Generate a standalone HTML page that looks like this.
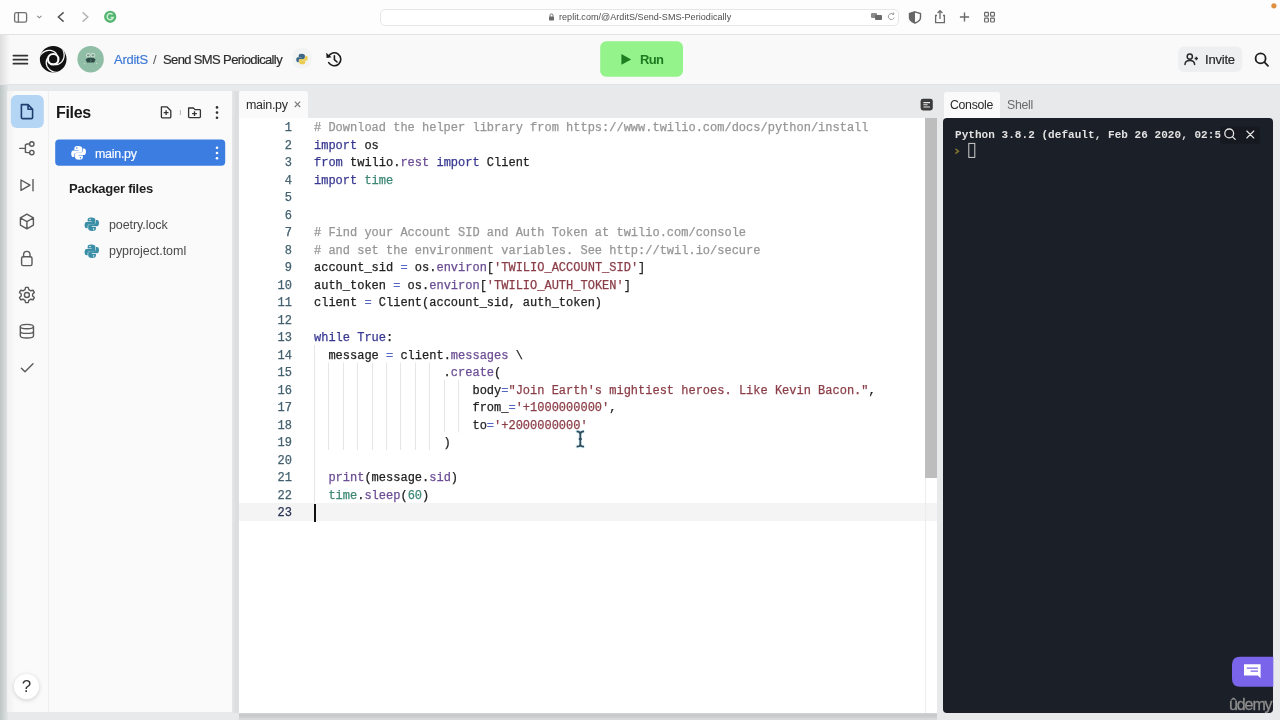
<!DOCTYPE html>
<html><head><meta charset="utf-8">
<style>
*{box-sizing:border-box;margin:0;padding:0}
html,body{width:1280px;height:720px;overflow:hidden;background:#e7e9ea;-webkit-font-smoothing:antialiased;font-family:"Liberation Sans",sans-serif;position:relative}
.a{position:absolute;will-change:transform}
#chrome{left:0;top:0;width:1280px;height:35px;background:#fdfdfd;border-bottom:1px solid #e2e2e2}
#url{left:380px;top:9px;width:519px;height:17px;border:1px solid #e6e6e6;border-radius:5px;background:#fff}
#hdr{left:0;top:35px;width:1280px;height:50px;background:#f9f9f9;border-bottom:1px solid #e3e3e5}
#lstrip{left:0;top:85px;width:8px;height:635px;background:linear-gradient(90deg,#bec5c5,#d3d8d8 60%,#e2e5e5)}
#hstrip{left:0;top:35px;width:10px;height:49px;background:linear-gradient(90deg,#dedede,#f9f9f9)}
#rail{left:7px;top:91px;width:42px;height:621px;background:linear-gradient(90deg,#f0f0f0,#fafafa 8px);border-right:1px solid #efefef}
#files{left:49px;top:91px;width:183px;height:621px;background:#fafafa}
#tab{left:239px;top:91px;width:69px;height:27px;background:#fafafa;border-radius:3px 3px 0 0}
#ed{left:239px;top:118px;width:698px;height:595px;background:#fff}
#ctab{left:943.5px;top:91.5px;width:56px;height:27px;background:#fafafa;border-radius:3px 3px 0 0}
#con{left:943px;top:118px;width:330px;height:595px;background:#1b1f27;border-radius:4px}
.code{font-family:"Liberation Mono",monospace;font-size:12px;line-height:17.5px;white-space:pre;-webkit-text-stroke:0.25px currentColor}
.ln{color:#43606f;text-align:right;width:60px}
.c{color:#969696}.k{color:#383892}.p{color:#6b4d94}.t{color:#3d8874}.s{color:#8b3d47}.o{color:#5566c4}.n{color:#222}
.ui{color:#2b2b2b;white-space:nowrap}
</style></head><body>
<div id="chrome" class="a"></div>
<div id="url" class="a"></div>
<svg class="a" style="left:0;top:0" width="1280" height="35">
 <g fill="none" stroke="#6f6f6f" stroke-width="1.3">
  <rect x="14.6" y="12.6" width="12" height="9.6" rx="1.8"/>
  <line x1="18.4" y1="12.6" x2="18.4" y2="22.2"/>
 </g>
 <path d="M37.2 15.8 L39.3 17.8 L41.4 15.8" fill="none" stroke="#8a8a8a" stroke-width="1.1"/>
 <path d="M63.6 12.4 L58.4 17 L63.6 21.6" fill="none" stroke="#555" stroke-width="1.5"/>
 <path d="M82.6 12.4 L87.8 17 L82.6 21.6" fill="none" stroke="#b5b5b5" stroke-width="1.5"/>
 <circle cx="110.2" cy="16.8" r="6.1" fill="#53b46f"/>
 <path d="M112.6 14.6 A3.1 3.1 0 1 0 113.2 17.6 L110.6 17.6" fill="none" stroke="#c9f0d4" stroke-width="1.5"/>
 <g fill="#6a6a6a"><rect x="549" y="16.6" width="5" height="3.8" rx="0.6"/></g>
 <path d="M550 16.8 V15.4 A1.5 1.5 0 0 1 553 15.4 V16.8" fill="none" stroke="#6a6a6a" stroke-width="1"/>
 <g fill="#8a8a8a"><rect x="871" y="13" width="6" height="5" rx="1"/></g>
 <rect x="875" y="15" width="7" height="5" rx="1" fill="#6a6a6a"/>
 <path d="M893.6 14.6 A3 3 0 1 0 894.2 17.5" fill="none" stroke="#9a9a9a" stroke-width="1"/>
 <path d="M891.8 14 L893.8 14.4 L893.6 12.4" fill="none" stroke="#9a9a9a" stroke-width="1"/>
 <path d="M915 11.8 L920.5 13.6 V17.4 Q920.5 21 915 23 Q909.5 21 909.5 17.4 V13.6 Z" fill="none" stroke="#666" stroke-width="1.4"/>
 <path d="M915 11.8 V23 Q909.5 21 909.5 17.4 V13.6 Z" fill="#666"/>
 <path d="M937 15.5 H935.6 V22.6 H944.4 V15.5 H943" fill="none" stroke="#6a6a6a" stroke-width="1.3"/>
 <path d="M940 19 V10.8 M937.6 13 L940 10.6 L942.4 13" fill="none" stroke="#6a6a6a" stroke-width="1.3"/>
 <path d="M964.5 12.4 V21.6 M959.9 17 H969.1" stroke="#6a6a6a" stroke-width="1.4"/>
 <g fill="none" stroke="#6a6a6a" stroke-width="1.2">
  <rect x="984.6" y="12.4" width="3.8" height="3.8" rx="0.8"/><rect x="990.6" y="12.4" width="3.8" height="3.8" rx="0.8"/>
  <rect x="984.6" y="18.2" width="3.8" height="3.8" rx="0.8"/><rect x="990.6" y="18.2" width="3.8" height="3.8" rx="0.8"/>
 </g>
 <circle cx="1273.9" cy="5.8" r="2.6" fill="#de9040"/>
</svg>
<div class="a ui" style="left:559px;top:11px;font-size:9px;line-height:12px;color:#4d4d4d;letter-spacing:0.05px">replit.com/@ArditS/Send-SMS-Periodically</div>

<div id="hdr" class="a"></div>
<div id="lstrip" class="a"></div>
<div id="hstrip" class="a"></div>
<svg class="a" style="left:0;top:35px" width="1280" height="49">
 <g stroke="#333" stroke-width="1.7" stroke-linecap="round">
  <line x1="13.4" y1="20.6" x2="27.4" y2="20.6"/><line x1="13.4" y1="24.7" x2="27.4" y2="24.7"/><line x1="13.4" y1="28.7" x2="27.4" y2="28.7"/>
 </g>
 <defs><clipPath id="lc"><circle cx="0" cy="0" r="13.3"/></clipPath></defs>
 <g transform="translate(53.2,24.2)">
  <circle r="13.3" fill="#111"/>
  <g clip-path="url(#lc)"><path d="M3.73 -4.44 L3.26 -5.17 L2.69 -5.94 L1.99 -6.68 L1.13 -7.36 L0.13 -7.95 L-1.02 -8.42 L-2.29 -8.73 L-3.67 -8.86 L-5.13 -8.77 L-6.64 -8.46 L-8.16 -7.89 L-9.65 -7.07 L-11.06 -5.99 L-12.37 -4.65 L-13.51 -3.07 L-14.44 -1.26" fill="none" stroke="#fafafa" stroke-width="1.3"/>
<path d="M1.98 5.45 L2.85 5.41 L3.80 5.30 L4.79 5.06 L5.81 4.66 L6.82 4.09 L7.80 3.33 L8.71 2.38 L9.50 1.25 L10.16 -0.06 L10.64 -1.52 L10.91 -3.12 L10.95 -4.82 L10.72 -6.59 L10.21 -8.38 L9.41 -10.16 L8.32 -11.88" fill="none" stroke="#fafafa" stroke-width="1.3"/>
<path d="M-5.71 -1.01 L-6.11 -0.23 L-6.49 0.64 L-6.78 1.62 L-6.94 2.70 L-6.95 3.86 L-6.78 5.09 L-6.42 6.35 L-5.84 7.61 L-5.03 8.83 L-4.01 9.98 L-2.76 11.01 L-1.30 11.89 L0.34 12.58 L2.15 13.04 L4.09 13.23 L6.13 13.14" fill="none" stroke="#fafafa" stroke-width="1.3"/></g>
  <circle r="5.2" fill="none" stroke="#fafafa" stroke-width="2.2"/>
  <circle r="3.7" fill="#111"/>
 </g>
 <circle cx="90.6" cy="24.2" r="13.2" fill="#8fbda6"/>
 <g transform="translate(90.6,24.2)">
  <circle cx="-2.3" cy="-3.9" r="2.2" fill="#d5e6dc"/><circle cx="2.3" cy="-3.9" r="2.2" fill="#d5e6dc"/>
  <circle cx="-2.3" cy="-3.9" r="1.3" fill="#7d9a8c"/><circle cx="2.3" cy="-3.9" r="1.3" fill="#7d9a8c"/>
  <path d="M-5 0.4 L-2.6 -1.4 L2.6 -1.4 L5 0.4 L3.6 3.4 L-3.6 3.4 Z" fill="#2d4b44"/>
  <path d="M-0.6 0.2 L1 1.2 L-0.6 2.2" fill="none" stroke="#6a8a7c" stroke-width="0.6"/>
  <circle cx="-6" cy="4.4" r="0.7" fill="#cfe0d6"/><circle cx="6" cy="4.4" r="0.7" fill="#cfe0d6"/>
 </g>
 <rect x="292.5" y="13" width="19" height="20.5" rx="8" fill="#f2f3f3"/>
 <g transform="translate(302,24) scale(0.82)">
  <path d="M-0.5 -6.5 C-3.5 -6.5 -4 -5.5 -4 -4 V-2.5 H0 V-2 H-5 C-6.5 -2 -7 -0.5 -7 1 C-7 3 -6.2 4 -5 4 H-4 V2 C-4 0.8 -3 0 -2 0 H1.8 C2.8 0 3.5 -0.8 3.5 -1.8 V-4 C3.5 -5.5 2.5 -6.5 -0.5 -6.5 Z" fill="#3c6685"/>
  <path d="M0.5 6.5 C3.5 6.5 4 5.5 4 4 V2.5 H0 V2 H5 C6.5 2 7 0.5 7 -1 C7 -3 6.2 -4 5 -4 H4 V-2 C4 -0.8 3 0 2 0 H-1.8 C-2.8 0 -3.5 0.8 -3.5 1.8 V4 C-3.5 5.5 -2.5 6.5 0.5 6.5 Z" fill="#e9cd52"/>
 </g>
 <g fill="none" stroke="#1c1c1c" stroke-width="1.6" stroke-linecap="round">
  <path d="M328.4 21.6 A6.5 6.5 0 1 1 328.7 27.6"/>
  <path d="M334.4 20.8 V24.6 L337 27"/>
 </g>
 <path d="M326.2 17.8 L326.6 23 L331.6 22.2 Z" fill="#1c1c1c"/>
 <rect x="600.2" y="6.2" width="82.8" height="35.6" rx="6" fill="#94f38b"/>
 <path d="M621.4 19 L631.2 24.4 L621.4 29.8 Z" fill="#1f7d21"/>
 <rect x="1178.2" y="11.6" width="64" height="25.4" rx="6" fill="#edeff0"/>
 <g fill="none" stroke="#2a2a2a" stroke-width="1.5" stroke-linecap="round">
  <circle cx="1189.8" cy="21.6" r="2.6"/>
  <path d="M1185 29.6 C1185 26.4 1186.8 25.4 1189.8 25.4 C1192.8 25.4 1194.6 26.4 1194.6 29.6"/>
 </g>
 <path d="M1196.3 21.8 V25.2 M1194.6 23.5 H1198" stroke="#2a2a2a" stroke-width="1.3"/>
 <g fill="none" stroke="#1e1e1e" stroke-width="1.8" stroke-linecap="round">
  <circle cx="1260.6" cy="23.4" r="5"/>
  <path d="M1264.4 27.2 L1268 30.8"/>
 </g>
</svg>
<div class="a ui" style="left:114px;top:52.3px;-webkit-text-stroke:0.2px currentColor;font-size:13px;line-height:16px;color:#3f7ad6;letter-spacing:-0.25px">ArditS</div>
<div class="a ui" style="left:153px;top:52.3px;font-size:13px;line-height:16px;color:#555">/</div>
<div class="a ui" style="left:163px;top:52.3px;-webkit-text-stroke:0.2px currentColor;font-size:13px;line-height:16px;color:#2d2d2d;letter-spacing:-0.63px">Send SMS Periodically</div>
<div class="a ui" style="left:640px;top:52px;font-size:13px;line-height:16px;color:#1e7a20;font-weight:bold;letter-spacing:-0.7px">Run</div>
<div class="a ui" style="left:1205px;top:52.3px;-webkit-text-stroke:0.2px currentColor;font-size:13px;line-height:16px;color:#262626;letter-spacing:-0.2px">Invite</div>

<div id="rail" class="a"></div>
<div id="files" class="a"></div>
<svg class="a" style="left:0;top:0" width="240" height="270">
 <g fill="none" stroke="#333" stroke-width="1.3" stroke-linejoin="round">
  <path d="M161.4 106.8 H166.8 L170.8 110.8 V117 Q170.8 117.8 170 117.8 H162.2 Q161.4 117.8 161.4 117 Z"/>
  <path d="M166.1 110.2 V115 M163.7 112.6 H168.5"/>
  <path d="M188.6 108 H193.4 L195 109.6 H199.6 Q200.4 109.6 200.4 110.4 V116.8 Q200.4 117.6 199.6 117.6 H189.4 Q188.6 117.6 188.6 116.8 Z"/>
  <path d="M194.5 111.2 V116 M192.1 113.6 H196.9"/>
 </g>
 <line x1="180.4" y1="110" x2="180.4" y2="115" stroke="#b0b0b0" stroke-width="1"/>
 <g fill="#333"><circle cx="217" cy="107.4" r="1.3"/><circle cx="217" cy="112.6" r="1.3"/><circle cx="217" cy="117.8" r="1.3"/></g>
 <rect x="55.2" y="139.4" width="170" height="26.4" rx="4" fill="#3b7de1"/>
 <g transform="translate(78.6,152.8) scale(0.92)"><path d="M-0.5 -7.5 C-4 -7.5 -4.6 -6.3 -4.6 -4.6 V-3 H0 V-2.4 H-5.8 C-7.4 -2.4 -8 -0.6 -8 1.2 C-8 3.4 -7.2 4.6 -5.8 4.6 H-4.6 V2.4 C-4.6 1 -3.5 0 -2.3 0 H2 C3.2 0 4 -0.9 4 -2 V-4.6 C4 -6.3 2.8 -7.5 -0.5 -7.5 Z" fill="#fff"/><path d="M0.5 7.5 C4 7.5 4.6 6.3 4.6 4.6 V3 H0 V2.4 H5.8 C7.4 2.4 8 0.6 8 -1.2 C8 -3.4 7.2 -4.6 5.8 -4.6 H4.6 V-2.4 C4.6 -1 3.5 0 2.3 0 H-2 C-3.2 0 -4 0.9 -4 2 V4.6 C-4 6.3 -2.8 7.5 0.5 7.5 Z" fill="#fff"/><circle cx="-2" cy="-5.3" r="0.8" fill="#3a7be0"/><circle cx="2" cy="5.3" r="0.8" fill="#3a7be0"/></g>
 <g fill="#fff"><circle cx="217" cy="147.8" r="1.3"/><circle cx="217" cy="153" r="1.3"/><circle cx="217" cy="158.2" r="1.3"/></g>
 <g transform="translate(91.8,224.2) scale(0.9)"><path d="M-0.5 -7.5 C-4 -7.5 -4.6 -6.3 -4.6 -4.6 V-3 H0 V-2.4 H-5.8 C-7.4 -2.4 -8 -0.6 -8 1.2 C-8 3.4 -7.2 4.6 -5.8 4.6 H-4.6 V2.4 C-4.6 1 -3.5 0 -2.3 0 H2 C3.2 0 4 -0.9 4 -2 V-4.6 C4 -6.3 2.8 -7.5 -0.5 -7.5 Z" fill="#3a8ea6"/><path d="M0.5 7.5 C4 7.5 4.6 6.3 4.6 4.6 V3 H0 V2.4 H5.8 C7.4 2.4 8 0.6 8 -1.2 C8 -3.4 7.2 -4.6 5.8 -4.6 H4.6 V-2.4 C4.6 -1 3.5 0 2.3 0 H-2 C-3.2 0 -4 0.9 -4 2 V4.6 C-4 6.3 -2.8 7.5 0.5 7.5 Z" fill="#3a8ea6"/><circle cx="-2" cy="-5.3" r="0.8" fill="#fafafa"/><circle cx="2" cy="5.3" r="0.8" fill="#fafafa"/></g>
 <g transform="translate(91.8,251.2) scale(0.9)"><path d="M-0.5 -7.5 C-4 -7.5 -4.6 -6.3 -4.6 -4.6 V-3 H0 V-2.4 H-5.8 C-7.4 -2.4 -8 -0.6 -8 1.2 C-8 3.4 -7.2 4.6 -5.8 4.6 H-4.6 V2.4 C-4.6 1 -3.5 0 -2.3 0 H2 C3.2 0 4 -0.9 4 -2 V-4.6 C4 -6.3 2.8 -7.5 -0.5 -7.5 Z" fill="#3a8ea6"/><path d="M0.5 7.5 C4 7.5 4.6 6.3 4.6 4.6 V3 H0 V2.4 H5.8 C7.4 2.4 8 0.6 8 -1.2 C8 -3.4 7.2 -4.6 5.8 -4.6 H4.6 V-2.4 C4.6 -1 3.5 0 2.3 0 H-2 C-3.2 0 -4 0.9 -4 2 V4.6 C-4 6.3 -2.8 7.5 0.5 7.5 Z" fill="#3a8ea6"/><circle cx="-2" cy="-5.3" r="0.8" fill="#fafafa"/><circle cx="2" cy="5.3" r="0.8" fill="#fafafa"/></g>
</svg>
<div class="a ui" style="left:55.5px;top:104.2px;font-size:16px;line-height:18px;color:#161616;font-weight:bold;letter-spacing:-0.3px">Files</div>
<div class="a ui" style="left:95px;top:146.8px;-webkit-text-stroke:0.15px currentColor;font-size:12.5px;line-height:15px;color:#fff;letter-spacing:-0.3px">main.py</div>
<div class="a ui" style="left:68.5px;top:180.8px;font-size:13px;line-height:16px;color:#1f1f1f;font-weight:bold;letter-spacing:-0.25px">Packager files</div>
<div class="a ui" style="left:108.6px;top:217.5px;font-size:12.5px;line-height:15px;color:#4a4a4a;letter-spacing:-0.08px">poetry.lock</div>
<div class="a ui" style="left:108.6px;top:243.5px;font-size:12.5px;line-height:15px;color:#4a4a4a;letter-spacing:-0.05px">pyproject.toml</div>

<svg class="a" style="left:0;top:0" width="49" height="720">
 <rect x="10.8" y="95" width="33" height="33" rx="6" fill="#b5d5f5"/>
 <path d="M21.4 104.6 H28 L32.6 109.2 V117.4 Q32.6 118.6 31.4 118.6 H22.6 Q21.4 118.6 21.4 117.4 Z M28 104.6 V109.2 H32.6" fill="none" stroke="#1d3f6e" stroke-width="1.6" stroke-linejoin="round"/>
 <g fill="none" stroke="#5a5a5a" stroke-width="1.4" stroke-linecap="round" stroke-linejoin="round">
  <path d="M19.8 148.4 H25.4 M25.4 144.6 V152.2 M25.4 145.8 Q25.4 144 27.2 144 H29.6 M25.4 151 Q25.4 152.6 27.2 152.6 H29.6"/>
  <circle cx="31.8" cy="144" r="2.2"/><circle cx="31.8" cy="152.6" r="2.2"/>
  <path d="M21 180 L30 185.2 L21 190.4 Z"/>
  <path d="M33 179.6 V190.8"/>
  <path d="M26.9 214.2 L33.4 217.9 V225.1 L26.9 228.8 L20.4 225.1 V217.9 Z M20.6 218 L26.9 221.6 L33.2 218 M26.9 221.6 V228.6"/>
  <rect x="21.6" y="256.8" width="10.4" height="8.8" rx="1.6"/>
  <path d="M23.6 256.8 V254.6 A3.2 3.2 0 0 1 30 254.6 V256.8"/>
  <circle cx="26.9" cy="295" r="2.5"/>
  <path d="M25.6 287.4 H28.2 L28.8 289.6 L30.8 290.8 L33 290.2 L34.3 292.4 L32.6 294 V296 L34.3 297.6 L33 299.8 L30.8 299.2 L28.8 300.4 L28.2 302.6 H25.6 L25 300.4 L23 299.2 L20.8 299.8 L19.5 297.6 L21.2 296 V294 L19.5 292.4 L20.8 290.2 L23 290.8 L25 289.6 Z"/>
  <ellipse cx="26.9" cy="326.6" rx="6.6" ry="2.2"/>
  <path d="M20.3 326.6 V335.8 Q20.3 338 26.9 338 Q33.5 338 33.5 335.8 V326.6 M20.3 331.2 Q20.3 333.4 26.9 333.4 Q33.5 333.4 33.5 331.2"/>
  <path d="M21.4 368.2 L25 371.8 L33 363.8"/>
 </g>
 <circle cx="26.5" cy="686.6" r="12.6" fill="#fff" style="filter:drop-shadow(0 1px 2px rgba(0,0,0,.18))"/>
</svg>
<div class="a ui" style="left:20px;top:677px;width:13px;text-align:center;font-size:17px;line-height:20px;color:#333">?</div>

<div class="a" style="left:232px;top:91px;width:7px;height:622px;background:linear-gradient(90deg,#e4e7e7,#dadede 60%,#dde0e0)"></div>
<div id="tab" class="a"></div>
<div id="ed" class="a"></div>

<div class="a ui" style="left:245.5px;top:98px;font-size:12.5px;line-height:15px;color:#2a2a2a;letter-spacing:-0.3px">main.py</div>
<svg class="a" style="left:0;top:0" width="940" height="130">
 <path d="M294.8 101.6 L300.2 107 M300.2 101.6 L294.8 107" stroke="#777" stroke-width="1.1"/>
 <rect x="920.6" y="98.8" width="12.2" height="11.6" rx="2.4" fill="#3c3c3c"/>
 <path d="M923.4 102.6 H930 M923.4 104.8 H927.6 M923.4 107 H930" stroke="#e8e8e8" stroke-width="1.1"/>
</svg>
<div class="a" style="left:239px;top:503px;width:698px;height:17.5px;background:#f4f4f4"></div>
<svg class="a" style="left:0;top:0" width="940" height="720"><g stroke="#e6e6e6" stroke-width="1"><line x1="314.5" y1="345.0" x2="314.5" y2="502.5"/><line x1="328.5" y1="362.5" x2="328.5" y2="450.0"/><line x1="343.5" y1="362.5" x2="343.5" y2="450.0"/><line x1="357.5" y1="362.5" x2="357.5" y2="450.0"/><line x1="372.5" y1="362.5" x2="372.5" y2="450.0"/><line x1="386.5" y1="362.5" x2="386.5" y2="450.0"/><line x1="400.5" y1="362.5" x2="400.5" y2="450.0"/><line x1="415.5" y1="362.5" x2="415.5" y2="450.0"/><line x1="429.5" y1="362.5" x2="429.5" y2="450.0"/><line x1="444.5" y1="380.0" x2="444.5" y2="432.5"/><line x1="458.5" y1="380.0" x2="458.5" y2="432.5"/></g></svg>
<div class="a" style="left:925px;top:118px;width:12px;height:360px;background:#bdbdbd"></div>
<div class="a" style="left:925px;top:478px;width:1px;height:235px;background:#ececec"></div>
<div class="a code ln" style="left:232px;top:120px">1
2
3
4
5
6
7
8
9
10
11
12
13
14
15
16
17
18
19
20
21
22
<span style="color:#283252">23</span></div>
<div class="a code n" style="left:314px;top:120px"><span class="c"># Download the helper library from https://www.twilio.com/docs/python/install</span>
<span class="k">import</span> os
<span class="k">from</span> twilio.<span class="p">rest</span> <span class="k">import</span> Client
<span class="k">import</span> <span class="t">time</span>


<span class="c"># Find your Account SID and Auth Token at twilio.com/console</span>
<span class="c"># and set the environment variables. See http://twil.io/secure</span>
account_sid <span class="o">=</span> os.<span class="p">environ</span>[<span class="s">'TWILIO_ACCOUNT_SID'</span>]
auth_token <span class="o">=</span> os.<span class="p">environ</span>[<span class="s">'TWILIO_AUTH_TOKEN'</span>]
client <span class="o">=</span> Client(account_sid, auth_token)

<span class="k">while</span> <span class="k">True</span>:
  message <span class="o">=</span> client.<span class="p">messages</span> \
                  .<span class="p">create</span>(
                      body<span class="o">=</span><span class="s">"Join Earth's mightiest heroes. Like Kevin Bacon."</span>,
                      from_<span class="o">=</span><span class="s">'+1000000000'</span>,
                      to<span class="o">=</span><span class="s">'+2000000000'</span>
                  )

  <span class="p">print</span>(message.<span class="p">sid</span>)
  <span class="t">time</span>.<span class="p">sleep</span>(<span class="t">60</span>)
</div>
<div class="a" style="left:314px;top:503.5px;width:1.6px;height:17.5px;background:#111"></div>
<svg class="a" style="left:570px;top:425px" width="20" height="28">
 <g stroke="#dff4fb" stroke-width="3.6" fill="none" stroke-linecap="round"><path d="M7 6.5 Q10.3 6.5 10.3 9 V19.5 Q10.3 21.6 7 21.6 M13.6 6.5 Q10.3 6.5 10.3 9 M13.6 21.6 Q10.3 21.6 10.3 19.5"/></g>
 <g stroke="#2f4b5c" stroke-width="1.8" fill="none"><path d="M6.6 6.4 Q10.3 6.4 10.3 9 V19.5 Q10.3 21.6 6.6 21.6 M14 6.4 Q10.3 6.4 10.3 9 M14 21.6 Q10.3 21.6 10.3 19.5 M8.8 14 H11.8"/></g>
</svg>
<div class="a" style="left:239px;top:713px;width:698px;height:7px;background:linear-gradient(180deg,#d0d4d4,#c5c9c9 35%,#d9dddd)"></div>
<div id="ctab" class="a"></div>
<div id="con" class="a"></div>

<div class="a ui" style="left:949.5px;top:98.2px;font-size:12.3px;line-height:15px;color:#2a2a2a;letter-spacing:-0.3px">Console</div>
<div class="a ui" style="left:1006.5px;top:98.2px;font-size:12.3px;line-height:15px;color:#6b6b6b;letter-spacing:-0.3px">Shell</div>
<div class="a ui" style="left:954.5px;top:128px;font-family:'Liberation Mono',monospace;font-size:11px;line-height:15px;color:#e2e2e2;font-weight:bold;letter-spacing:0.05px">Python 3.8.2 (default, Feb 26 2020, 02:5</div>
<svg class="a" style="left:940px;top:118px" width="340" height="600">
 <rect x="280.7" y="8.6" width="39.2" height="17.2" rx="2" fill="#161a20"/>
 <g fill="none" stroke="#e6e6e6" stroke-width="1.3" stroke-linecap="round">
  <circle cx="289.2" cy="15.4" r="4.4"/><path d="M292.4 18.6 L295.2 21.4"/>
  <path d="M306.8 13 L313.8 20 M313.8 13 L306.8 20" stroke-width="1.1"/>
 </g>
 <path d="M15.4 30.8 L18.4 33.2 L15.4 35.6" fill="none" stroke="#7e7234" stroke-width="1.6"/>
 <rect x="28.8" y="25.4" width="6" height="14" fill="none" stroke="#cfcfcf" stroke-width="1"/>
 <path d="M333.3 538.7 V568.7 H300 Q292 568.7 292 560.7 V546.7 Q292 538.7 300 538.7 Z" fill="#7a64ea"/>
 <path d="M304 546.2 H320.6 V560.2 L317.8 557.6 H304 Z" fill="#fff"/>
 <path d="M306.8 550.2 H318 M310.6 553.2 H318" stroke="#7a64ea" stroke-width="1.3"/>
</svg>
<div class="a ui" style="left:1228.5px;top:696px;font-size:16px;line-height:18px;color:#8e8e8e;letter-spacing:-1.1px;-webkit-text-stroke:0.3px currentColor">ûdemy</div>
</body></html>
